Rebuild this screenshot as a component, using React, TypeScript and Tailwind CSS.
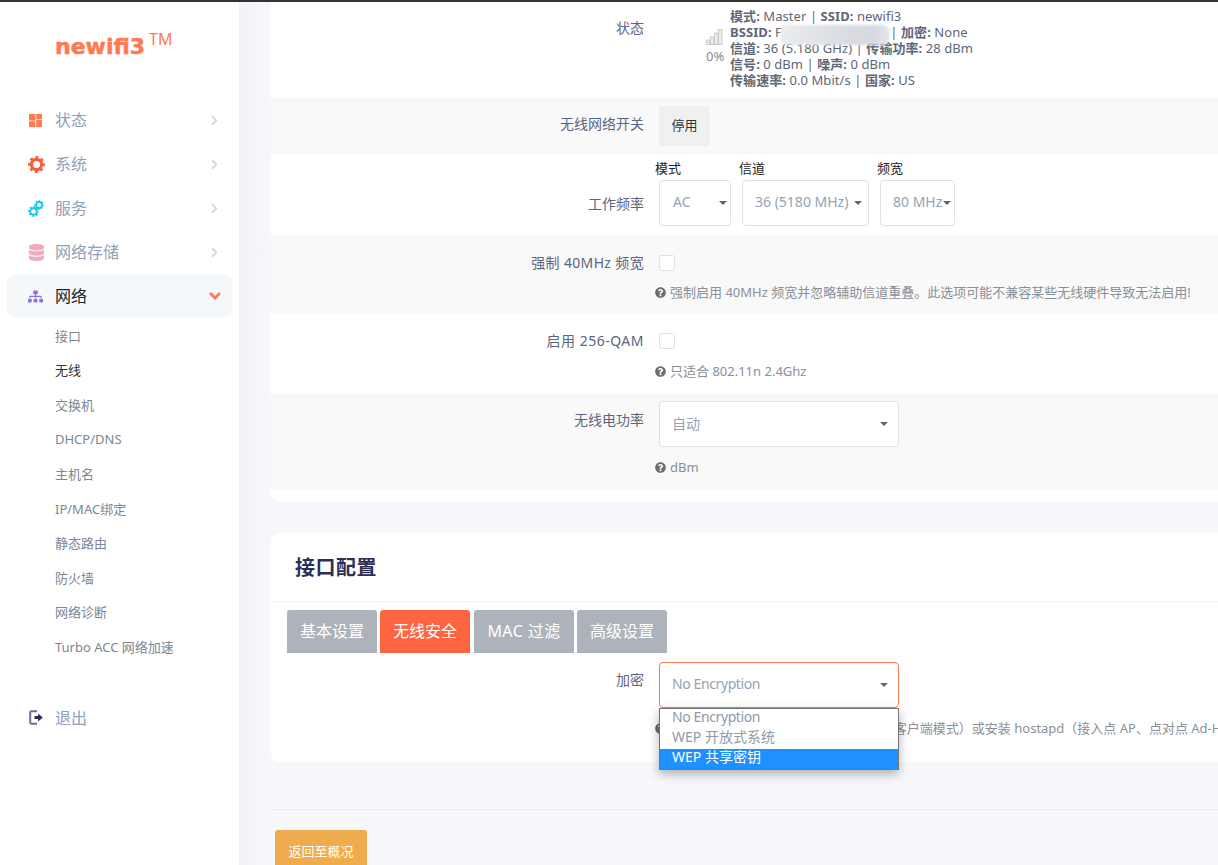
import { FaAngleDown, FaChevronRight, FaDatabase, FaQuestionCircle, FaSitemap } from "react-icons/fa";

const font = { fontFamily: '"Noto Sans", "Noto Sans CJK SC", sans-serif' };

const subItems = ["接口", "无线", "交换机", "DHCP/DNS", "主机名", "IP/MAC绑定", "静态路由", "防火墙", "网络诊断", "Turbo ACC 网络加速"];

function StatusIcon() {
    return (
        <svg width="13" height="13" viewBox="0 0 13 13" className="ml-[1px]">
            <path d="M0 0h6.5v6.5H0zM7.2 0H13v5H7.2zM0 7.2h6.5V13H0zM7.2 5.8H13V13H7.2z" fill="#ff7a50" />
        </svg>
    );
}

// ring with teeth, the round cog used for 系统 and 服务
function Gear({ size, color }: { size: number; color: string }) {
    return (
        <svg width={size} height={size} viewBox="0 0 20 20" fill="none" stroke={color}>
            <circle cx="10" cy="10" r="6" strokeWidth="3.6" />
            <circle cx="10" cy="10" r="8.4" strokeWidth="3" strokeDasharray="3.3 3.3" strokeDashoffset="1.6" />
        </svg>
    );
}

function ServiceIcon() {
    return (
        <div className="relative h-[17px] w-[17px]">
            <div className="absolute bottom-0 left-[0px]"><Gear size={11} color="#19c8f0" /></div>
            <div className="absolute right-[1px] top-0"><Gear size={10} color="#19c8f0" /></div>
        </div>
    );
}

function LogoutIcon() {
    return (
        <svg width="15" height="15" viewBox="0 0 15 15" fill="none">
            <path d="M8 1.2H2.6c-.8 0-1.4.6-1.4 1.4v9.8c0 .8.6 1.4 1.4 1.4H8" stroke="#6f6b92" strokeWidth="2" />
            <path d="M5.5 6h3.6V3.4l4.7 4.1-4.7 4.1V9H5.5z" fill="#2f2a55" />
        </svg>
    );
}

function NavItem({ icon, label }: { icon: React.ReactNode; label: string }) {
    return (
        <div className="flex h-[44px] items-center pl-[28px] pr-[19px]">
            <span className="flex w-[27px] items-center">{icon}</span>
            <span className="flex-1 text-[16px] text-[#8fa1b8]">{label}</span>
            <FaChevronRight className="text-[11px] text-[#ccd2da]" />
        </div>
    );
}

function Caret() {
    return <span className="h-0 w-0 border-x-[4px] border-t-[4px] border-x-transparent border-t-[#666]" />;
}

function Select({ value, className, textClass = "-mt-[3px]" }: { value: string; className: string; textClass?: string }) {
    return (
        <div className={`flex h-[46px] items-center justify-between rounded border border-[#dfe1e8] bg-white text-[14px] text-[#94a3b5] ${className}`}>
            <span className={textClass}>{value}</span>
            <Caret />
        </div>
    );
}

function Label({ children, className = "" }: { children: React.ReactNode; className?: string }) {
    return <div className={`w-[373px] shrink-0 text-right text-[14px] text-[#5d6580] ${className}`}>{children}</div>;
}

function Help({ children }: { children: React.ReactNode }) {
    return (
        <div className="flex items-center gap-[4px] overflow-hidden whitespace-nowrap text-[13px] text-[#8a8f98]">
            <FaQuestionCircle className="shrink-0 text-[11px] text-[#6c6c6c]" />
            <span>{children}</span>
        </div>
    );
}

function Checkbox() {
    return <div className="h-[16px] w-[16px] rounded-[3px] border border-[#dfe1e8] bg-white" />;
}

function Tab({ label, active, className = "w-[90px]" }: { label: string; active?: boolean; className?: string }) {
    return (
        <div className={`flex h-[43px] items-center justify-center rounded-t-[3px] pb-[2px] text-[16px] text-white ${active ? "bg-[#ff6540]" : "bg-[#acb3ba]"} ${className}`}>
            {label}
        </div>
    );
}

export default function App() {
    return (
        <div className="flex h-[865px] w-[1218px] flex-col overflow-hidden bg-[#f7f8fc]" style={font}>
            <div className="h-[2px] shrink-0 bg-[#333]" />
            <div className="flex min-h-0 flex-1">
                {/* sidebar */}
                <aside className="w-[239px] shrink-0 bg-white">
                    <div className="flex h-[96px] items-start pl-[55px] pt-[25px]">
                        <span className="text-[22px] font-bold leading-[40px] text-[#ff7a50] [-webkit-text-stroke:0.5px_#ff7a50]" style={{ fontFamily: '"DejaVu Sans", sans-serif' }}>newifi3</span>
                        <span className="ml-[4px] text-[16px] leading-[24px] text-[#ff7a50]">TM</span>
                    </div>
                    <NavItem icon={<StatusIcon />} label="状态" />
                    <NavItem icon={<Gear size={17} color="#ff5c38" />} label="系统" />
                    <NavItem icon={<ServiceIcon />} label="服务" />
                    <NavItem icon={<FaDatabase className="text-[17px] text-[#f3a8bb]" />} label="网络存储" />
                    <div className="mx-[7px] mt-[1px] flex h-[42px] items-center rounded-[8px] bg-[#f5f8fb] pl-[21px] pr-[8px]">
                        <span className="flex w-[27px] items-center"><FaSitemap className="text-[15px] text-[#8f6ee0]" /></span>
                        <span className="flex-1 text-[16px] text-[#222]">网络</span>
                        <FaAngleDown className="text-[18px] text-[#ff7a50]" />
                    </div>
                    <div className="mt-[2px] flex flex-col pl-[55px]">
                        {subItems.map((item) => (
                            <div key={item} className={`flex h-[34.6px] items-center text-[13px] ${item === "无线" ? "text-[#333]" : "text-[#7b8794]"}`}>{item}</div>
                        ))}
                    </div>
                    <div className="mt-[41px] flex items-center pl-[29px]">
                        <span className="flex w-[26px] items-center"><LogoutIcon /></span>
                        <span className="text-[16px] text-[#8fa1b8]">退出</span>
                    </div>
                </aside>

                {/* main */}
                <main className="min-w-0 flex-1 bg-[linear-gradient(90deg,#f1f2f8,#f7f8fc_32px)] pl-[32px]">
                    <div className="rounded-bl-[8px] bg-white pb-[12px]">
                        <div className="flex h-[95px] pt-[15px]">
                            <Label>状态</Label>
                            <div className="ml-[62px] mt-[12px] flex w-[24px] shrink-0 flex-col items-start">
                                <svg width="17" height="16" viewBox="0 0 17 16" fill="#ececea" stroke="#c4c4c0" strokeWidth="0.8">
                                    <rect x="0.5" y="11" width="3.5" height="4.6" />
                                    <rect x="4.5" y="8" width="3.5" height="7.6" />
                                    <rect x="8.5" y="4" width="3.5" height="11.6" />
                                    <rect x="12.5" y="0.5" width="3.5" height="15.1" />
                                </svg>
                                <span className="mt-[2px] text-[13px] leading-[18px] text-[#848a99]">0%</span>
                            </div>
                            <div className="relative -mt-[9px] whitespace-nowrap text-[13px] leading-[16px] tracking-[0.07px] text-[#5e6678]">
                                <div><b>模式:</b> Master | <b>SSID:</b> newifi3</div>
                                <div><b>BSSID:</b> F<span className="inline-block w-[105px]" /> | <b>加密:</b> None</div>
                                <div><b>信道:</b> 36 (5.180 GHz) | <b>传输功率:</b> 28 dBm</div>
                                <div><b>信号:</b> 0 dBm | <b>噪声:</b> 0 dBm</div>
                                <div><b>传输速率:</b> 0.0 Mbit/s | <b>国家:</b> US</div>
                                <div className="absolute left-[50px] top-[17px] h-[20px] w-[110px] rounded-[8px] bg-[linear-gradient(90deg,#eceded,#dcdde3_55%,#d8d9e0_85%,#e6e7ea)] blur-[1px]" />
                            </div>
                        </div>

                        <div className="flex h-[58px] items-center bg-[#f9f9f9]">
                            <Label className="-mt-[6px]">无线网络开关</Label>
                            <div className="ml-[15px] flex h-[40px] w-[51px] items-center justify-center rounded-[3px] bg-[#f0f0f0] text-[13px] text-[#333]">停用</div>
                        </div>

                        <div className="flex h-[80px] items-end pb-[9px]">
                            <Label className="mb-[12px]">工作频率</Label>
                            <div className="ml-[11px] flex pb-0">
                                <div className="w-[84px]">
                                    <div className="mb-[4px] text-[13px] leading-[16px] text-[#222]">模式</div>
                                    <Select value="AC" className="ml-[4px] w-[72px] pl-[13px] pr-[3px]" />
                                </div>
                                <div className="w-[138px]">
                                    <div className="mb-[4px] text-[13px] leading-[16px] text-[#222]">信道</div>
                                    <Select value="36 (5180 MHz)" className="ml-[3px] w-[127px] pl-[12px] pr-[6px]" />
                                </div>
                                <div>
                                    <div className="mb-[4px] text-[13px] leading-[16px] text-[#222]">频宽</div>
                                    <Select value="80 MHz" className="ml-[3px] w-[75px] pl-[12px] pr-[3px]" />
                                </div>
                            </div>
                        </div>

                        <div className="h-[78px] bg-[#f9f9f9] pt-[17px]">
                            <div className="flex items-center">
                                <Label className="tracking-[0.35px]">强制 40MHz 频宽</Label>
                                <div className="ml-[11px] pl-[4px]"><Checkbox /></div>
                            </div>
                            <div className="ml-[384px] mt-[10px]"><Help>强制启用 40MHz 频宽并忽略辅助信道重叠。此选项可能不兼容某些无线硬件导致无法启用!</Help></div>
                        </div>

                        <div className="h-[80px] pt-[17px]">
                            <div className="flex items-center">
                                <Label className="tracking-[0.5px]">启用 256-QAM</Label>
                                <div className="ml-[15px]"><Checkbox /></div>
                            </div>
                            <div className="ml-[384px] mt-[11px]"><Help>只适合 802.11n 2.4Ghz</Help></div>
                        </div>

                        <div className="h-[96px] bg-[#f9f9f9] pt-[8px]">
                            <div className="flex items-start">
                                <Label className="mt-[8px]">无线电功率</Label>
                                <Select value="自动" textClass="-mt-[1px]" className="ml-[15px] w-[240px] pl-[12px] pr-[10px]" />
                            </div>
                            <div className="ml-[384px] mt-[11px]"><Help>dBm</Help></div>
                        </div>
                    </div>

                    <div className="relative mt-[32px] h-[229px] rounded-l-[8px] bg-white">
                        <div className="flex h-[69px] items-center border-b border-[#f0f1f4] pl-[24px] pt-[2px] text-[20px] font-bold tracking-[0.5px] text-[#2f2f55]">接口配置</div>
                        <div className="mt-[8px] flex pl-[16px]">
                            <Tab label="基本设置" />
                            <Tab label="无线安全" active className="ml-[3px] w-[90px]" />
                            <Tab label="MAC 过滤" className="ml-[4px] w-[100px] tracking-[0.4px]" />
                            <Tab label="高级设置" className="ml-[3px] w-[90px]" />
                        </div>
                        <div className="mt-[9px] flex items-start">
                            <Label className="mt-[7px]">加密</Label>
                            <Select value="No Encryption" textClass="-mt-[3px] tracking-[-0.4px]" className="ml-[15px] w-[240px] !border-[#ff7a50] pl-[12px] pr-[10px]" />
                        </div>
                        <div className="ml-[384px] mt-[11px]"><Help>WPA 加密需要安装 <span className="inline-block w-[4px]" />wpa_supplicant（客户端模式）或安装 hostapd（接入点 AP、点对点 Ad-Hoc 模式）</Help></div>

                        <div className="absolute left-[388px] top-[175px] w-[240px] border border-[#767676] bg-white text-[14px] text-[#8e9bab] shadow-[0_4px_10px_rgba(0,0,0,0.3)]">
                            <div className="h-[20px] pl-[12px] leading-[15px] tracking-[-0.4px]">No Encryption</div>
                            <div className="h-[20px] pl-[12px] leading-[15px]">WEP 开放式系统</div>
                            <div className="h-[20px] bg-[#1e90ff] pl-[12px] leading-[15px] text-white">WEP 共享密钥</div>
                        </div>
                    </div>

                    <div className="mt-[47px] border-t border-[#eceef3] pl-[4px] pt-[20px]">
                        <div className="flex h-[44px] w-[92px] items-center justify-center rounded-[3px] bg-[#eeac4d] text-[13px] text-white">返回至概况</div>
                    </div>
                </main>
            </div>
        </div>
    );
}
